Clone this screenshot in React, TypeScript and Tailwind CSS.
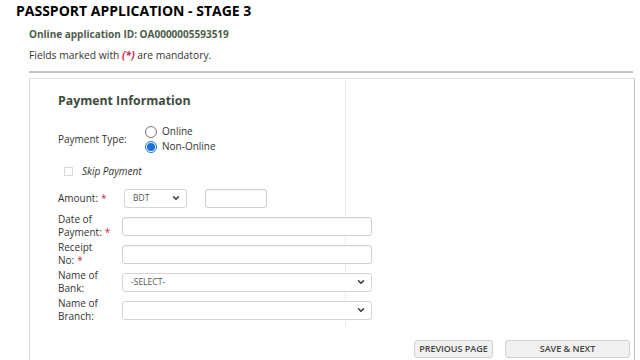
import { ChevronDown } from "lucide-react";

function Radio({ checked, label }: { checked?: boolean; label: string }) {
  return (
    <label className="flex h-[15px] items-center gap-[5px]">
      {checked ? (
        <span className="flex h-[12px] w-[12px] items-center justify-center rounded-full border border-[#1a6fd6] bg-white">
          <span className="h-[8px] w-[8px] rounded-full bg-[#1a6fd6]" />
        </span>
      ) : (
        <span className="h-[12px] w-[12px] rounded-full border border-[#767676] bg-white" />
      )}
      <span className="text-[10px] leading-[15px] text-[#333]">{label}</span>
    </label>
  );
}

function Req() {
  return <span className="ml-[3px] text-[#d0284a]">*</span>;
}

function SelectBox({ value, className }: { value?: string; className: string }) {
  return (
    <div
      className={`flex h-[19px] items-center justify-between rounded-[3px] border border-[#d4d4d4] bg-white pl-[8px] pr-[5px] text-[8.5px] text-[#555] ${className}`}
    >
      <span>{value}</span>
      <ChevronDown size={10} strokeWidth={3.5} className="text-[#333]" />
    </div>
  );
}

function TextBox({ className }: { className: string }) {
  return (
    <div
      className={`h-[19px] rounded-[3px] border border-[#cfcfcf] bg-white shadow-[inset_0_1px_1px_rgba(0,0,0,0.04)] ${className}`}
    />
  );
}

const rows: { l1: string; l2: string; req?: boolean; kind: "text" | "select"; value?: string }[] = [
  { l1: "Date of", l2: "Payment:", req: true, kind: "text" },
  { l1: "Receipt", l2: "No:", req: true, kind: "text" },
  { l1: "Name of", l2: "Bank:", kind: "select", value: "-SELECT-" },
  { l1: "Name of", l2: "Branch:", kind: "select" },
];

export default function App() {
  return (
    <div className="h-[360px] w-[640px] overflow-hidden bg-white font-['Open_Sans',sans-serif] text-[#333]">
      {/* Header */}
      <h1 className="pl-[16px] pt-[1px] text-[14px] font-bold leading-[20px] text-black">
        PASSPORT APPLICATION - STAGE 3
      </h1>
      <div className="pl-[29px] pr-[6px]">
        <p className="mt-[6px] text-[10px] font-bold leading-[14px] text-[#4c5c4c]">
          Online application ID: OA0000005593519
        </p>
        <p className="mt-[7px] text-[10.3px] leading-[14px] text-[#333]">
          Fields marked with{" "}
          <span className="font-bold italic text-[#d0284a]">(*)</span> are mandatory.
        </p>
        <div className="mt-[9px] h-[2px] w-[604px] bg-[#c6c6c6]" />

        {/* Form box */}
        <div className="relative mt-[5px] w-[606px] border-l border-r border-t border-l-[#dcdcdc] border-r-[#c2c2c2] border-t-[#e4e4e4] pb-[20px] pl-[28px] pr-[4px] pt-[14px]">
          <div className="pointer-events-none absolute left-[315px] top-[2px] h-[245px] border-l border-dotted border-[#d8d8d8]" />

          <h2 className="relative text-[12.3px] font-bold leading-[16px] text-[#3d4b3d]">
            Payment Information
          </h2>

          <div className="relative mt-[15px] flex items-center">
            <span className="w-[87px] text-[10px]">Payment Type:</span>
            <div className="flex flex-col">
              <Radio label="Online" />
              <Radio checked label="Non-Online" />
            </div>
          </div>

          <div className="relative mt-[9px] flex h-[16px] items-center pl-[6px]">
            <span className="h-[9px] w-[9px] border border-[#dadada] bg-white" />
            <span className="ml-[9px] text-[10px] italic text-[#333]">Skip Payment</span>
          </div>

          <div className="relative mt-[5px] flex h-[28px] items-center">
            <span className="w-[66px] text-[10px]">
              Amount:
              <Req />
            </span>
            <SelectBox value="BDT" className="w-[63px]" />
            <TextBox className="ml-[18px] w-[62px]" />
          </div>

          {rows.map((r, i) => (
            <div key={i} className="relative flex h-[28px] items-center">
              <span className="w-[64px] text-[10px] leading-[13px]">
                {r.l1}
                <br />
                {r.l2}
                {r.req && <Req />}
              </span>
              {r.kind === "text" ? (
                <TextBox className="w-[250px]" />
              ) : (
                <SelectBox value={r.value} className="w-[250px]" />
              )}
            </div>
          ))}

          <div className="relative mt-[16px] flex justify-end gap-[12px]">
            <button className="h-[18px] w-[79px] rounded-[3px] border border-[#d2d2d2] bg-[#f0f0f0] text-[9px] font-semibold text-[#444]">
              PREVIOUS PAGE
            </button>
            <button className="h-[18px] w-[125px] rounded-[3px] border border-[#d2d2d2] bg-[#f0f0f0] text-[9px] font-semibold text-[#444]">
              SAVE &amp; NEXT
            </button>
          </div>
        </div>
      </div>
    </div>
  );
}
